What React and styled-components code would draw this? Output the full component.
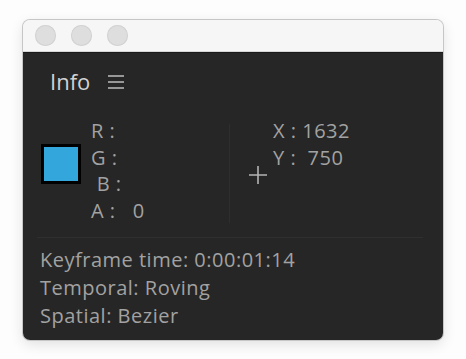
import styled, { createGlobalStyle } from "styled-components";

const GlobalStyle = createGlobalStyle`
  *, *::before, *::after {
    box-sizing: border-box;
  }
  html, body {
    margin: 0;
    padding: 0;
    background: #fdfdfd;
  }
  body {
    font-family: "Open Sans", "Noto Sans", Arial, sans-serif;
  }
`;

const Page = styled.div`
  padding: 20px 0 0 23px;
  height: 359px;
`;

const Window = styled.div`
  width: 420px;
  height: 320px;
  border-radius: 7px;
  overflow: hidden;
  display: flex;
  flex-direction: column;
  box-shadow: 0 0 0 1px #c6c6c6, 0 4px 14px rgba(0, 0, 0, 0.12);
`;

const TitleBar = styled.div`
  height: 32px;
  flex-shrink: 0;
  background: #f6f6f6;
  border-bottom: 1px solid #d6d6d6;
  display: flex;
  align-items: center;
  gap: 15px;
  padding-left: 12px;
`;

const Light = styled.span`
  width: 21px;
  height: 21px;
  border-radius: 50%;
  background: #dedede;
  box-shadow: inset 0 0 0 1px #d2d2d2;
`;

const Panel = styled.div`
  flex: 1;
  background: #262626;
  border-top: 1px solid #1a1a1a;
  padding: 0 20px 0 14px;
  display: flex;
  flex-direction: column;
`;

const Header = styled.div`
  display: flex;
  align-items: center;
  gap: 18px;
  height: 60px;
  padding: 0 0 5px 13px;
`;

const Title = styled.span`
  color: #d2d2d2;
  font-size: 22px;
`;

const Menu = styled.svg`
  display: block;
  margin-top: 2px;
`;

const Top = styled.div`
  display: flex;
  height: 124px;
  padding-top: 11px;
`;

const ColorSide = styled.div`
  display: flex;
  align-items: flex-start;
  width: 193px;
  border-right: 1px solid #2e2e2e;
  margin-bottom: 14px;
`;

const Swatch = styled.div`
  width: 40px;
  height: 40px;
  flex-shrink: 0;
  margin: 20px 0 0 4px;
  background: #33a7dc;
  border: 3px solid #000;
`;

const Values = styled.div`
  display: flex;
  flex-direction: column;
  margin-left: 10px;
  margin-top: -6px;
`;

const Row = styled.div`
  color: #a2a2a2;
  font-size: 20px;
  line-height: 26.7px;
  letter-spacing: 0.5px;
  white-space: pre;
`;

const PointSide = styled.div`
  display: flex;
  align-items: flex-start;
  padding-left: 19px;
`;

const Cross = styled.svg`
  display: block;
  flex-shrink: 0;
  margin-top: 42px;
  margin-right: 6px;
`;

const PointValues = styled(Values)`
  margin-left: 0;
`;

const Info = styled.div`
  border-top: 1px solid #2f2f2f;
  padding-left: 3px;
  padding-top: 8px;
`;

const Line = styled.div`
  color: #a2a2a2;
  font-size: 20px;
  line-height: 28px;
  letter-spacing: 0.5px;
`;

export default function App() {
  return (
    <>
      <GlobalStyle />
      <Page>
        <Window>
          <TitleBar>
            <Light />
            <Light />
            <Light />
          </TitleBar>
          <Panel>
            <Header>
              <Title>Info</Title>
              <Menu width="16" height="14" viewBox="0 0 16 14">
                <path d="M0 1h16M0 7h16M0 13h16" stroke="#bdbdbd" strokeWidth="1.6" />
              </Menu>
            </Header>
            <Top>
              <ColorSide>
                <Swatch />
                <Values>
                  <Row>R :</Row>
                  <Row>G :</Row>
                  <Row> B :</Row>
                  <Row>A :   0</Row>
                </Values>
              </ColorSide>
              <PointSide>
                <Cross width="18" height="18" viewBox="0 0 18 18">
                  <path d="M0 9h18M9 0v18" stroke="#b4b4b4" strokeWidth="1.6" />
                </Cross>
                <PointValues>
                  <Row>X : 1632</Row>
                  <Row>Y :  750</Row>
                </PointValues>
              </PointSide>
            </Top>
            <Info>
              <Line>Keyframe time: 0:00:01:14</Line>
              <Line>Temporal: Roving</Line>
              <Line>Spatial: Bezier</Line>
            </Info>
          </Panel>
        </Window>
      </Page>
    </>
  );
}
